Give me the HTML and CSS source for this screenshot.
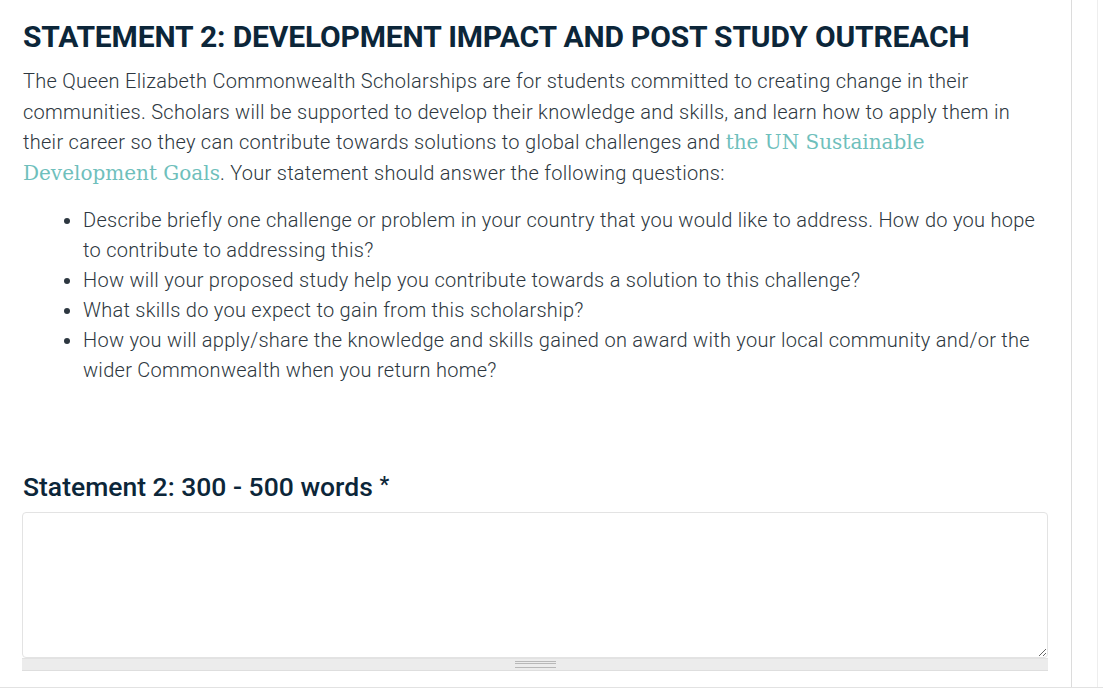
FILE: index.html
```
<!DOCTYPE html>
<html lang="en">
<head>
<meta charset="utf-8">
<title>Statement 2</title>
<link rel="stylesheet" href="styles.css">
</head>
<body>
<div class="page">
  <main class="content">
    <h2 class="title">STATEMENT 2: DEVELOPMENT IMPACT AND POST STUDY OUTREACH</h2>
    <p class="intro">The Queen Elizabeth Commonwealth Scholarships are for students committed to creating change in their communities. Scholars will be supported to develop their knowledge and skills, and learn how to apply them in their career so they can contribute towards solutions to global challenges and <a class="link" href="#">the UN Sustainable Development Goals</a>. Your statement should answer the following questions:</p>
    <ul class="questions">
      <li>Describe briefly one challenge or problem in your country that you would like to address. How do you hope to contribute to addressing this?</li>
      <li>How will your proposed study help you contribute towards a solution to this challenge?</li>
      <li>What skills do you expect to gain from this scholarship?</li>
      <li>How you will apply/share the knowledge and skills gained on award with your local community and/or the wider Commonwealth when you return home?</li>
    </ul>
    <label class="field-label" for="st2">Statement 2: 300 - 500 words <span class="req">*</span></label>
    <textarea id="st2" class="field"></textarea>
    <div class="grip-bar"><span class="grip"></span></div>
  </main>
  <aside class="rail"></aside>
</div>
</body>
</html>
```
FILE: styles.css
```
html, body {
  margin: 0;
  padding: 0;
  background: #ffffff;
}
body {
  font-family: Roboto, "Noto Sans", Arial, sans-serif;
  color: #333a40;
  height: 688px;
  overflow: hidden;
}
.page {
  display: flex;
  height: 687px;
  border-bottom: 1px solid #e2e2e2;
}
.content {
  width: 1026px;
  padding: 0 0 0 22px;
  box-sizing: content-box;
  flex: none;
}
.rail {
  margin-left: 23px;
  width: 25px;
  border-left: 1px solid #dcdcdc;
  border-right: 1px solid #eeeeee;
}
.title {
  margin: 17px 0 0 1px;
  font-size: 30px;
  line-height: 40px;
  font-weight: 700;
  color: #0c2639;
  letter-spacing: -0.15px;
}
.intro {
  margin: 9px 0 0 1px;
  font-size: 20px;
  line-height: 30.5px;
  font-weight: 300;
  letter-spacing: 0.28px;
  color: #2d3740;
}
.link {
  font-family: "DejaVu Serif", "Liberation Serif", serif;
  color: #6fbfbc;
  text-decoration: none;
  font-size: 20px;
  letter-spacing: 0;
}
.questions {
  margin: 17px 0 0 0;
  padding-left: 61px;
  font-size: 20px;
  line-height: 30px;
  font-weight: 300;
  letter-spacing: 0.28px;
  color: #2d3740;
}
.field-label {
  display: block;
  margin: 85px 0 0 1px;
  font-size: 26.5px;
  font-weight: 500;
  color: #0c2639;
  line-height: 30px;
}
.req {
  font-size: 22px;
  vertical-align: 4px;
}
.field {
  display: block;
  margin-top: 10px;
  width: 1026px;
  height: 146px;
  box-sizing: border-box;
  border: 1px solid #e3e3e3;
  border-radius: 4px;
  background: #ffffff;
  resize: vertical;
  font: inherit;
}
.grip-bar {
  height: 13px;
  width: 1026px;
  background: #ececec;
  border-top: 1px solid #e2e2e2;
  border-bottom: 1px solid #dedede;
  box-sizing: border-box;
  display: flex;
  justify-content: center;
  align-items: center;
}
.grip {
  display: block;
  width: 41px;
  height: 5px;
  border-top: 1px solid #b8b8b8;
  border-bottom: 1px solid #b8b8b8;
  position: relative;
}
.grip::after {
  content: "";
  position: absolute;
  left: 0;
  right: 0;
  top: 1px;
  height: 1px;
  background: #b8b8b8;
}
```
